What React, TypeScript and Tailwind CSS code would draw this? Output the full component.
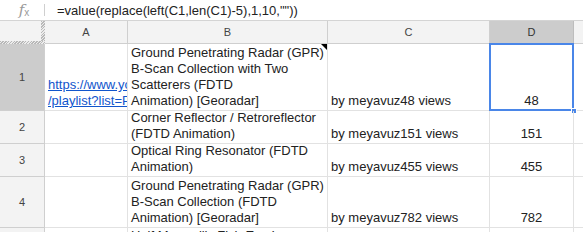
import React from "react";

const F = { fontFamily: '"Liberation Sans", Arial, sans-serif' };

const hatchV =
  "bg-[repeating-linear-gradient(135deg,#b8b8b8_0px,#b8b8b8_1px,#ececec_1px,#ececec_2px)]";

type Row = {
  n: string;
  h: string;
  a?: React.ReactNode;
  b: string[];
  c: string;
  d: string;
  sel?: boolean;
  note?: boolean;
};

const rows: Row[] = [
  {
    n: "1",
    h: "h-[67px]",
    a: (
      <>
        <div>https://www.youtube.com</div>
        <div>/playlist?list=PL</div>
      </>
    ),
    b: [
      "Ground Penetrating Radar (GPR)",
      "B-Scan Collection with Two",
      "Scatterers (FDTD",
      "Animation) [Georadar]",
    ],
    c: "by meyavuz48 views",
    d: "48",
    sel: true,
    note: true,
  },
  {
    n: "2",
    h: "h-[33px]",
    b: ["Corner Reflector / Retroreflector", "(FDTD Animation)"],
    c: "by meyavuz151 views",
    d: "151",
  },
  {
    n: "3",
    h: "h-[33px]",
    b: ["Optical Ring Resonator (FDTD", "Animation)"],
    c: "by meyavuz455 views",
    d: "455",
  },
  {
    n: "4",
    h: "h-[51px]",
    b: [
      "Ground Penetrating Radar (GPR)",
      "B-Scan Collection (FDTD",
      "Animation) [Georadar]",
    ],
    c: "by meyavuz782 views",
    d: "782",
  },
  {
    n: "5",
    h: "h-[50px]",
    b: [
      "Half Maxwell's Fish Eye Lens",
      "(FDTD Animation)",
      "[Optics]",
    ],
    c: "by meyavuz300 views",
    d: "300",
  },
];

export default function App() {
  return (
    <div
      className="w-[583px] h-[232px] overflow-hidden bg-white text-[#222] relative"
      style={F}
    >
      {/* formula bar */}
      <div className="h-[21px] flex items-center border-b border-[#d4d4d4]">
        <div
          className="w-[44px] flex items-center justify-center text-[#9a9a9a] italic text-[15px] leading-none pl-[4px]"
          style={{ fontFamily: '"DejaVu Serif", serif' }}
        >
          <span>f</span>
          <span className="text-[10px] not-italic mt-[5px]" style={F}>
            x
          </span>
        </div>
        <div className="w-px h-[12px] bg-[#cfcfcf]" />
        <div className="pl-[12px] text-[13px] leading-none text-[#222]">
          =value(replace(left(C1,len(C1)-5),1,10,""))
        </div>
      </div>

      {/* column headers */}
      <div className="flex h-[23px] bg-[#f3f3f3] text-[11px] text-[#444]">
        <div className="w-[45px] relative shrink-0">
          <div className={`absolute right-0 top-0 bottom-0 w-[4px] ${hatchV}`} />
          <div className={`absolute left-0 right-0 bottom-0 h-[3px] ${hatchV}`} />
        </div>
        <div className="w-[83px] shrink-0 border-r border-b border-[#cfcfcf] flex items-center justify-center">
          A
        </div>
        <div className="w-[200px] shrink-0 border-r border-b border-[#cfcfcf] flex items-center justify-center">
          B
        </div>
        <div className="w-[162px] shrink-0 border-r border-b border-[#cfcfcf] flex items-center justify-center">
          C
        </div>
        <div className="w-[84px] shrink-0 border-r border-b border-[#bdbdbd] bg-[#cccccc] flex items-center justify-center text-[#333]">
          D
        </div>
        <div className="flex-1 border-b border-[#cfcfcf]" />
      </div>

      {rows.map((r) => (
        <div key={r.n} className={`flex ${r.h} text-[13px] leading-[16px]`}>
          <div
            className={`w-[45px] shrink-0 border-r border-b border-[#cfcfcf] flex items-center justify-center text-[11px] text-[#444] ${
              r.sel ? "bg-[#cccccc] text-[#333]" : "bg-[#f3f3f3]"
            }`}
          >
            {r.n}
          </div>
          <div className="w-[83px] shrink-0 border-r border-b border-[#e2e2e2] flex flex-col justify-end pl-[3px] pb-[1px] overflow-hidden whitespace-nowrap text-[#1155cc] underline">
            {r.a}
          </div>
          <div className="w-[200px] shrink-0 border-r border-b border-[#e2e2e2] flex flex-col justify-end pl-[3px] pb-[1px] whitespace-nowrap overflow-hidden relative">
            {r.b.map((t, i) => (
              <div key={i}>{t}</div>
            ))}
            {r.note && (
              <div className="absolute top-0 right-0 w-0 h-0 border-t-[6px] border-l-[6px] border-t-black border-l-transparent" />
            )}
          </div>
          <div className="w-[162px] shrink-0 border-r border-b border-[#e2e2e2] flex items-end pl-[3px] pb-[1px] whitespace-nowrap">
            {r.c}
          </div>
          <div className="w-[84px] shrink-0 border-r border-b border-[#e2e2e2] flex items-end justify-center pb-[1px] relative">
            {r.d}
            {r.sel && (
              <>
                <div className="absolute -left-[1px] -top-[1px] -right-[1px] -bottom-[1px] border-2 border-[#4a86e8]" />
                <div className="absolute -right-[4px] -bottom-[4px] w-[6px] h-[6px] bg-[#4a86e8] border border-white" />
              </>
            )}
          </div>
          <div className="flex-1 border-b border-[#e2e2e2]" />
        </div>
      ))}
    </div>
  );
}
